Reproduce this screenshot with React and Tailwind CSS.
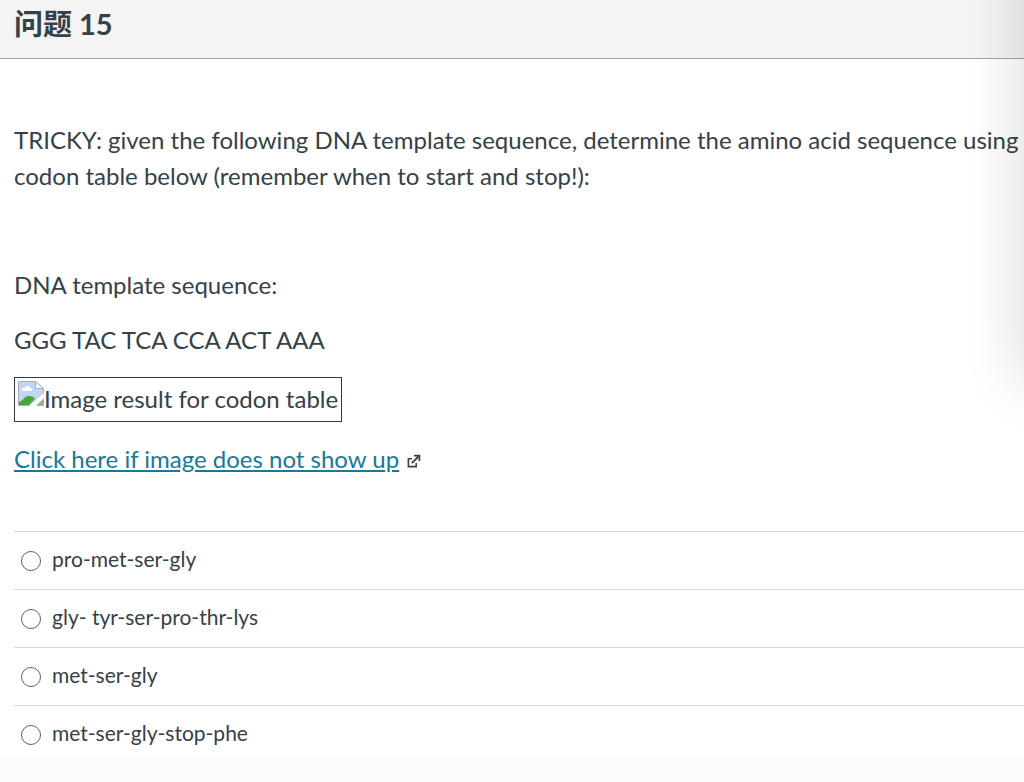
import React from "react";

const answers = [
  "pro-met-ser-gly",
  "gly- tyr-ser-pro-thr-lys",
  "met-ser-gly",
  "met-ser-gly-stop-phe",
];

function BrokenImageIcon() {
  return (
    <svg viewBox="0 0 26 26" className="size-[26px] shrink-0" aria-hidden="true">
      <path d="M.5.5h17l8 7v17H.5z" fill="#c3d5f6" stroke="#a9adb3" />
      <path d="M4 10c-1-3 2-4 3-3 1-3 5-2 5 0 3 0 3 3 1 3z" fill="#fff" />
      <path d="M1 24v-3c4-1 5-6 10-6 3 0 5 1 6 3l-6 6z" fill="#4aa63a" />
      <path d="M18 24l7-7v7z" fill="#8fae9c" />
      <path d="M10 26L26 12v5l-9 9z" fill="#fff" />
      <path d="M17.5.5v7h8z" fill="#f5f7fb" stroke="#a9adb3" />
    </svg>
  );
}

function ExternalLinkIcon() {
  return (
    <svg
      viewBox="0 0 14 14"
      className="size-[14px] shrink-0"
      fill="none"
      stroke="#3b4248"
      aria-hidden="true"
    >
      <path d="M5 4.8H1.4v7.8h7.8V9" strokeWidth="1.6" />
      <path d="M4.8 9.2L11.5 2.5" strokeWidth="1.9" />
      <path d="M7 1.6h5.4V7" strokeWidth="1.8" />
    </svg>
  );
}

export default function App() {
  return (
    <main className="relative min-h-screen overflow-hidden bg-white font-['Lato','Noto_Sans_CJK_SC',sans-serif] text-[#34414a]">
      <header className="border-b border-[#a5a5a5] bg-[#f4f4f4] px-3.5 pt-[5px] pb-[15px]">
        <h1 className="text-[29px] leading-[38px] font-bold">问题 15</h1>
      </header>

      <section className="pt-[63px] pl-3.5 text-2xl leading-9">
        <p className="whitespace-nowrap">
          TRICKY: given the following DNA template sequence, determine the amino acid sequence using
          <br />
          codon table below (remember when to start and stop!):
        </p>
        <p className="mt-[73px]">DNA template sequence:</p>
        <p className="mt-[19px]">GGG TAC TCA CCA ACT AAA</p>
        <div
          role="img"
          aria-label="Image result for codon table"
          className="mt-[19px] flex w-fit items-start border border-[#2d3b45] px-[3px] pt-[3px] pb-1"
        >
          <BrokenImageIcon />
          <span>Image result for codon table</span>
        </div>
        <p className="mt-[19px] flex items-center gap-2">
          <a href="#codon-table" className="text-[#1a7898] underline">
            Click here if image does not show up
          </a>
          <span className="pt-1">
            <ExternalLinkIcon />
          </span>
        </p>
      </section>

      <fieldset aria-label="Answers" className="mt-[54px] ml-3.5">
        {answers.map((answer, index) => (
          <label
            key={answer}
            className="flex h-[58px] items-center gap-[11px] border-t border-[#d9d9d9] pl-[7px] text-[21px] leading-7"
          >
            <input
              type="radio"
              name="answer"
              value={index}
              className="size-5 shrink-0 appearance-none rounded-full border border-[#606060] bg-white checked:border-[6px]"
            />
            <span className="pb-1">{answer}</span>
          </label>
        ))}
      </fieldset>

      <div className="-mt-2 h-7 bg-[#fcfcfc]" />

      <div
        aria-hidden="true"
        className="pointer-events-none absolute -top-20 -right-10 h-[460px] w-10 shadow-[0_0_60px_rgba(0,0,0,0.18)]"
      />
    </main>
  );
}
